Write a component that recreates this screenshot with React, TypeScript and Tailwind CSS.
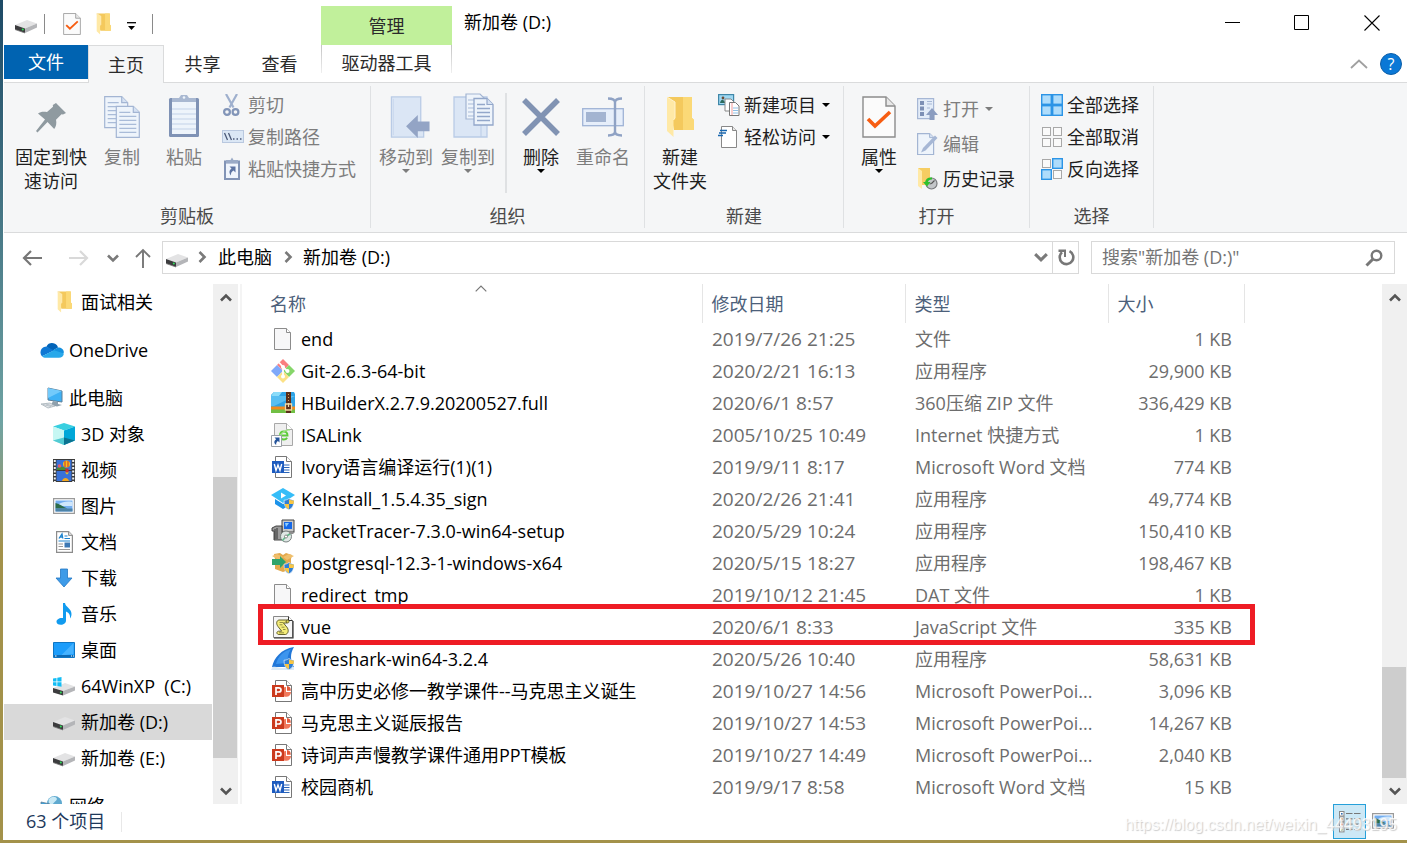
import React from 'react';

type IconProps = { className?: string };

/* ---------- Shared icons ---------- */

const Drive = ({ className = 'w-6 h-[22px]' }: IconProps) => (
  <svg viewBox="0 0 24 22" className={className}>
    <path d="M1 11 13 6l10 3.500-12 5z" fill="#e3e3e4" />
    <path d="M1 11l10 3.500V19L1 15.500z" fill="#3c3c3e" />
    <path d="M11 14.500l12-5v4L11 19z" fill="#b4b5b8" />
    <path d="M1 15.500 11 19" stroke="#777" strokeWidth=".8" />
    <circle cx="8.800" cy="15.600" r="1" fill="#2fe05a" />
  </svg>
);

const WinDrive = () => (
  <svg viewBox="0 0 24 22" className="w-6 h-[22px]">
    <path d="M1 13 13 8l10 3.500-12 4.500z" fill="#e3e3e4" />
    <path d="M1 13l10 3v4.500L1 17.500z" fill="#3c3c3e" />
    <path d="M11 16l12-4.500v4L11 20.500z" fill="#b4b5b8" />
    <circle cx="8.800" cy="17.500" r="1" fill="#2fe05a" />
    <path d="M1 3.500l3.500-.6v3.600H1zM5.300 2.800 9.500 2v4.500H5.300zM1 7.300h3.500v3.600L1 10.400zM5.300 7.300h4.200v4.500l-4.200-.8z" fill="#12bdf5" />
  </svg>
);

const Folder = ({ className = 'w-[15px] h-[22px]' }: IconProps) => (
  <svg viewBox="0 0 28 42" className={className}>
    <path d="M1 1h25v21l2 2v10H8z" fill="#f4c95d" />
    <path d="M17 1h9v21l2 2v10H17z" fill="#fbd977" />
    <path d="M1 1l8 5v16l-1.500 2V41L1 35z" fill="#ffe9a6" />
    <path d="M1 1l8 5v16l-1.500 2" fill="none" stroke="#fff3cf" strokeWidth="1" />
  </svg>
);

const CheckDoc = ({ className = '' }: IconProps) => (
  <svg viewBox="0 0 34 42" className={className}>
    <path d="M1 1h23l9 9v31H1z" fill="#fbfbfb" stroke="#8c8c8c" strokeWidth="1.400" />
    <path d="M24 1v9h9" fill="#e8e8e8" stroke="#8c8c8c" strokeWidth="1.400" />
    <path d="M6 23l7 7 15-14" fill="none" stroke="#f75d12" strokeWidth="3.600" />
  </svg>
);

const Caret = ({ className = '' }: IconProps) => (
  <svg viewBox="0 0 8 4" className={`w-2 h-1 shrink-0 ${className}`}>
    <path d="M0 0h8L4 4z" fill="currentColor" />
  </svg>
);

const Chevron = ({ className = '' }: IconProps) => (
  <svg viewBox="0 0 12 12" className={`w-3 h-3 shrink-0 ${className}`}>
    <path d="M1 3.500l5 5 5-5" fill="none" stroke="currentColor" strokeWidth="2.600" />
  </svg>
);

const Shield = () => (
  <g>
    <path d="M18 11.500c-2 1.400-3.500 1.700-5 1.700 0 5 1.500 8 5 9.600 3.500-1.600 5-4.600 5-9.600-1.500 0-3-.3-5-1.700z" fill="#2f7fd6" stroke="#fff" strokeWidth=".6" />
    <path d="M18 12.200V17h4.500c.3-1.200.4-2.300.4-3.400-1.800 0-3.200-.3-4.900-1.400zM18 17v5.200c-2.300-1-3.800-2.800-4.500-5.200z" fill="#f9c643" />
  </g>
);

/* ---------- Ribbon icons ---------- */

const Pin = () => (
  <svg viewBox="0 0 34 42" className="w-[34px] h-[42px]">
    <path d="M22 7l10 10-3 1.500-1.500-.3-5.500 5.600c.8 3.500.2 6.600-1.800 9.200L13.500 26 3.500 36.500 2 35l9-11.500L4 17.500c2.500-1.900 5.600-2.300 9-1.400l6-5.400-.2-1.800z" fill="#8f9aa0" />
  </svg>
);

const SheetLines = ({ x, y }: { x: number; y: number }) => (
  <g>
    <path d={`M${x} ${y}h17l6 6v25h-23z`} fill="#eef4fb" stroke="#a3b5d3" strokeWidth="1.200" />
    <path d={`M${x + 17} ${y}v6h6`} fill="#d6e2f3" stroke="#a3b5d3" strokeWidth="1.200" />
    <path
      d={`M${x + 3} ${y + 6}h11M${x + 3} ${y + 10}h17M${x + 3} ${y + 14}h17M${x + 3} ${y + 18}h17M${x + 3} ${y + 22}h17M${x + 3} ${y + 26}h17`}
      stroke="#a9bbd8"
      strokeWidth="1.300"
    />
  </g>
);

const CopyIcon = () => (
  <svg viewBox="0 0 36 42" className="w-9 h-[42px]">
    <SheetLines x={0.7} y={0.7} />
    <SheetLines x={12.3} y={10.3} />
  </svg>
);

const PasteIcon = () => (
  <svg viewBox="0 0 32 44" className="w-8 h-[44px] -mt-0.5">
    <rect x="1" y="4" width="30" height="39" rx="1.500" fill="#7f92b5" />
    <path d="M4 8h24v32H4z" fill="#eef4fb" />
    <path d="M4 15h24M4 20h24M4 25h24M4 30h24M4 35h24" stroke="#c3d2e8" strokeWidth="1" />
    <path d="M4 4h7l2-3h6l2 3h7v4H4z" fill="#a9b8d1" />
    <circle cx="16" cy="3.500" r="1.300" fill="#eef4fb" />
  </svg>
);

const CutIcon = () => (
  <svg viewBox="0 0 22 22" className="w-[22px] h-[22px]">
    <path d="M4 0l7.500 13.500M15 0 7.500 13.500" stroke="#9fb0ce" strokeWidth="2.200" />
    <circle cx="5" cy="18" r="2.900" fill="none" stroke="#8295b8" strokeWidth="2.200" />
    <circle cx="13.500" cy="18" r="2.900" fill="none" stroke="#8295b8" strokeWidth="2.200" />
  </svg>
);

const PathIcon = () => (
  <svg viewBox="0 0 22 22" className="w-[22px] h-[22px]">
    <rect x=".5" y="4.500" width="21" height="12" fill="#dbe7f5" stroke="#b9c8df" />
    <path d="M2.500 7l3 7M6.500 7l3 7" stroke="#4c5a78" strokeWidth="1.300" />
    <path d="M11 13h1.500M14.500 13H16M18 13h1.500" stroke="#4c5a78" strokeWidth="1.500" />
  </svg>
);

const PasteShortcut = () => (
  <svg viewBox="0 0 22 24" className="w-[22px] h-6">
    <rect x="2" y="3.500" width="16" height="19.500" fill="#8294b6" />
    <path d="M4 6.500h12v14.500H4z" fill="#f0f5fc" />
    <path d="M4 3h4.500L10 .5 11.500 3H16v3H4z" fill="#9aaac6" />
    <path d="M7.500 9.500h6v6l-2-2c-2 1.200-2.800 2.700-2.500 5-2.300-2.600-1.900-5.200.5-7z" fill="#5e75a3" />
  </svg>
);

const MoveTo = () => (
  <svg viewBox="0 0 40 43" className="w-10 h-[42px] ml-2">
    <path d="M1 1h30v28h3v13H1z" fill="#dbe6f5" stroke="#b9cbe6" strokeWidth="1.300" />
    <path d="M3 3v37" stroke="#c9d8ee" />
    <path d="M16 31l12-11.500V26h12v10H28v7z" fill="#93a4c5" />
  </svg>
);

const CopyTo = () => (
  <svg viewBox="0 0 41 45" className="w-[41px] h-[45px] -mt-[3px] ml-2.5">
    <path d="M1 4h33v40H1z" fill="#dbe6f5" stroke="#b9cbe6" strokeWidth="1.300" />
    <path d="M28 30v14" stroke="#b9cbe6" />
    <path d="M13 1h14l5 5v20H13z" fill="#eef4fb" stroke="#a3b5d3" strokeWidth="1.200" />
    <path d="M15 7h6M15 11h6M15 15h6M15 19h6M15 23h6" stroke="#a9bbd8" />
    <path d="M21 5.500h13l6 6V32H21z" fill="#eef4fb" stroke="#93a7ca" strokeWidth="1.300" />
    <path d="M34 5.500v6h6" fill="#d6e2f3" stroke="#93a7ca" strokeWidth="1.200" />
    <path d="M24 11.500h8M24 15.500h13M24 19.500h13M24 23.500h13M24 27.500h13" stroke="#93a7ca" strokeWidth="1.300" />
  </svg>
);

const DeleteIcon = () => (
  <svg viewBox="0 0 38 42" className="w-[38px] h-[42px]">
    <path d="M2 4l34 34M36 4 2 38" stroke="#8193b3" strokeWidth="5.500" />
  </svg>
);

const RenameIcon = () => (
  <svg viewBox="0 0 42 42" className="w-[42px] h-[42px]">
    <rect x=".7" y="12.700" width="40.600" height="17" fill="#e6eefa" stroke="#9fb3d6" strokeWidth="1.300" />
    <rect x="4" y="16" width="20" height="10" fill="#a3b4d1" />
    <path d="M26 2.500c4 0 7 1.200 7 4v29c0 2.800-3 4-7 4M40 2.500c-4 0-7 1.200-7 4M40 39.500c-4 0-7-1.200-7-4" fill="none" stroke="#8fa2c4" strokeWidth="2.400" />
  </svg>
);

const NewItem = () => (
  <svg viewBox="0 0 22 22" className="w-[22px] h-[22px]">
    <rect x=".6" y=".6" width="15" height="10" fill="#9fd8f2" stroke="#3f87a8" strokeWidth="1.200" />
    <path d="M2 9c1-4 3-4 4-2l2 2z" fill="#2e6b5d" />
    <circle cx="5" cy="4" r="1.400" fill="#6d4b35" />
    <path d="M7 5h6l3 3v9H7z" fill="#fff" stroke="#888" />
    <path d="M11.500 8.500h6l3.500 3.500v9.500h-9.500z" fill="#fff" stroke="#777" />
    <path d="M14 9v12" stroke="#f19b9b" />
    <path d="M15 14h5M15 16.500h5M15 19h5" stroke="#8fc0e6" />
  </svg>
);

const EasyAccess = () => (
  <svg viewBox="0 0 22 22" className="w-[22px] h-[22px]">
    <path d="M3.500.5h11l4 4v17h-15z" fill="#fff" stroke="#888" />
    <path d="M14.500.5v4h4" fill="#e8e8e8" stroke="#888" />
    <path d="M2 4.500h7M1 7h7M0 9.500h5" stroke="#1867b0" strokeWidth="1.300" />
  </svg>
);

const OpenIcon = () => (
  <svg viewBox="0 0 22 24" className="w-[22px] h-6">
    <path d="M.6 1.600h16v20H.6z" fill="#e3ecf8" stroke="#a6b7d5" strokeWidth="1.200" />
    <path d="M3 4h4v4H3zM3 9.500h4v4H3zM3 15h4v4H3z" fill="#7d90b5" />
    <path d="M10 4.500h5M10 7h5M10 11h3" stroke="#a6b7d5" />
    <path d="M15 11l6 7h-3.500v5h-5v-5H9z" fill="#8b9dc0" />
  </svg>
);

const EditIcon = () => (
  <svg viewBox="0 0 22 22" className="w-[22px] h-[22px]">
    <path d="M.6.600h12l4 4v17H.6z" fill="#eef4fb" stroke="#a3b5d3" strokeWidth="1.200" />
    <path d="M12.600.600v4h4" fill="#d6e2f3" stroke="#a3b5d3" />
    <path d="M4 19.500l2-4.500L18 2.500l2.500 2.500L8.500 17.500z" fill="#a6b7d5" />
  </svg>
);

const HistoryIcon = () => (
  <svg viewBox="0 0 22 22" className="w-[22px] h-[22px]">
    <path d="M1 0h12v17H5z" fill="#f6cd62" />
    <path d="M1 0l4 3v18l-4-3z" fill="#ffe9a6" />
    <circle cx="14.500" cy="15.500" r="5.500" fill="#c3c6c9" stroke="#77797c" strokeWidth="1.200" />
    <path d="M14.500 15.500l3-3M14.500 15.500l-2 .5" stroke="#555" strokeWidth="1.100" />
    <path d="M15 9.500c-4-.5-6.500 1.500-6.800 4.500H6l4 4.500 3.500-4.500H11c.3-1.700 1.600-2.600 4-2.500z" fill="#2dc02c" />
  </svg>
);

const tiles = [
  [0, 0],
  [1, 0],
  [0, 1],
  [1, 1],
];

const SelectIcon = ({ on }: { on: boolean[] }) => (
  <svg viewBox="0 0 22 22" className="w-[22px] h-[22px]">
    {tiles.map(([x, y], i) =>
      on[i] ? (
        <rect key={i} x={x * 11 + 0.7} y={y * 11 + 0.7} width="9.600" height="9.600" fill="#aedcfb" stroke="#2b94e6" strokeWidth="1.400" />
      ) : (
        <rect key={i} x={x * 11 + 1.5} y={y * 11 + 1.5} width="8" height="8" fill="#fafafa" stroke="#a8a8a8" />
      ),
    )}
  </svg>
);

/* ---------- Navigation icons ---------- */

const Cloud = () => (
  <svg viewBox="0 0 24 16" className="w-6 h-4">
    <path d="M6.500 4.500C8 1 12 .2 15 1.800c1.700.9 2.500 2.200 3 3.600L12 9z" fill="#0364b8" />
    <path d="M6.500 4.500C3 4.600.5 7 .5 10.500c0 1.500.6 2.900 1.500 3.800l12-5.800z" fill="#0f78d4" />
    <path d="M18 5.400c3.500 0 5.800 2 5.900 5l-2.900 3-8.500-5z" fill="#1490df" />
    <path d="M2 14.300 14 8.200l9.900 3.300c-.3 2.700-2.400 4.300-5 4.300H6c-1.600 0-3-.5-4-1.500z" fill="#28a8ea" />
  </svg>
);

const ThisPc = () => (
  <svg viewBox="0 0 24 22" className="w-6 h-[22px]">
    <path d="M8 1l14 3v11L8 13z" fill="#3fb1f5" stroke="#5d7f98" />
    <path d="M8 1l14 3L8 11z" fill="#73cafb" />
    <path d="M13 14l5 1v2l4 1-5 1.500-6-1.500z" fill="#8fa0ac" />
    <path d="M1 17l9-1 5 3-7 2z" fill="#e8ebee" stroke="#9aa6ae" strokeWidth=".7" />
    <path d="M3 17.500l8 2M6 17l7 2" stroke="#9aa6ae" strokeWidth=".6" />
  </svg>
);

const Cube = () => (
  <svg viewBox="0 0 22 22" className="w-[22px] h-[22px]">
    <path d="M11 0l11 3.500-11 4L0 3.500z" fill="#39cfe0" />
    <path d="M0 3.500l11 4V22L0 17.500z" fill="#aef0ee" />
    <path d="M22 3.500l-11 4V22l11-4.500z" fill="#00a7d8" />
    <path d="M0 3.500l11 4v7L0 17.500z" fill="#c6f7f3" />
    <path d="M0 17.500l11-3V22z" fill="#52cbd3" />
    <path d="M22 17.500l-11-3V22z" fill="#0b7390" />
  </svg>
);

const Video = () => (
  <svg viewBox="0 0 22 23" className="w-[22px] h-[23px]">
    <path d="M0 0h22v23H0z" fill="#3b3b3b" />
    <path d="M3.500 1h15v10h-15zM3.500 12h15v10h-15z" fill="#3a72d8" />
    <path d="M1.800 1v22M20.200 1v22" stroke="#f2f2f2" strokeWidth="2" strokeDasharray="2 1.500" />
    <path d="M4 9c3-2 8-2 10 2H4z" fill="#4c8d35" />
    <circle cx="13.500" cy="5" r="3.500" fill="#f6c21c" />
    <path d="M12 2v6M15 2v6" stroke="#d12c2c" strokeWidth="1" />
    <circle cx="6.500" cy="7" r="1.800" fill="#e55b6c" />
    <path d="M9 22c1-4 6-4 7 0z" fill="#f6a81c" />
    <path d="M12.500 9.500h3v4h-3z" fill="#d12c2c" />
    <path d="M12 13.500h4l-2 2z" fill="#f6c21c" />
  </svg>
);

const Picture = ({ className = 'w-[22px] h-4' }: IconProps) => (
  <svg viewBox="0 0 22 16" className={className}>
    <path d="M.6.600h20.800v14.800H.6z" fill="#fff" stroke="#9a9a9a" strokeWidth="1.200" />
    <path d="M2.500 2.500h17v11h-17z" fill="#74aef0" />
    <path d="M6 6c3-2 8-3 13.500-2v4H6z" fill="#cfe6fb" />
    <path d="M2.500 5c4 1 8 4 12 5.500H2.500z" fill="#2c6b48" />
    <path d="M2.500 10.500h17v3h-17z" fill="#4d83a8" />
  </svg>
);

const Documents = () => (
  <svg viewBox="0 0 17 22" className="w-[17px] h-[22px]">
    <path d="M.6.600h12l3.800 3.800v17H.6z" fill="#fff" stroke="#8c8c8c" strokeWidth="1.200" />
    <path d="M12.600.600v3.800h3.800" fill="#e3e3e3" stroke="#8c8c8c" />
    <path d="M3 7.500 6 3l.8 4.500M4 6h3" fill="none" stroke="#1c83cf" strokeWidth="1.300" />
    <path d="M8.500 5h3M8.500 7.500h5.500M2.500 10H14" stroke="#1c83cf" strokeWidth="1.200" />
    <path d="M2.500 13H7M2.500 15.500H7M2.500 18.500H14" stroke="#999" />
    <path d="M8.500 11.500H14v5H8.500z" fill="#3c78b4" />
  </svg>
);

const Download = () => (
  <svg viewBox="0 0 18 20" className="w-[18px] h-5">
    <path d="M5.500 1h7v9H17l-8 9-8-9h4.500z" fill="#3e9be8" stroke="#2277c4" strokeWidth=".8" />
  </svg>
);

const Music = () => (
  <svg viewBox="0 0 16 22" className="w-4 h-[22px]">
    <path d="M7 0h2c.5 4 6.500 5.500 6.500 11 0 2-.8 3.500-1.500 4.500.5-4-1.500-6-4-7v9c0 2.500-2.300 4.300-5.200 4.300C2.200 21.800.5 20.500.5 18.700c0-2.300 2.800-4.300 6.500-3.700z" fill="#119bef" />
  </svg>
);

const Desktop = () => (
  <svg viewBox="0 0 22 16" className="w-[22px] h-4">
    <path d="M.5.500h21v15H.5z" fill="#1c9dfb" stroke="#0f76c4" />
    <path d="M20.500 1v11L8 13.500z" fill="#45b2ff" />
    <path d="M1 14h20" stroke="#0c6ab5" strokeWidth="2" />
    <path d="M2 14h1.500M18 14h1M20 14h1" stroke="#fff" />
  </svg>
);

const Network = () => (
  <svg viewBox="0 0 24 22" className="w-6 h-[22px]">
    <circle cx="14.500" cy="8.500" r="7.500" fill="#5fa9cf" />
    <path d="M9 4c3-3 7-3 8 0-1 3-4 3-5 7-3-1-4-4-3-7z" fill="#c9e9f5" />
    <path d="M1 7l9 2v8l-9-2z" fill="#3fa1d8" stroke="#5d7f98" strokeWidth=".8" />
  </svg>
);

/* ---------- File type icons ---------- */

const BlankFile = () => (
  <svg viewBox="0 0 24 24" className="w-6 h-6">
    <path d="M3.500 1.500h12l4 4v17h-16z" fill="#f7f7f8" stroke="#8c8c8c" />
    <path d="M15.500 1.500v4h4" fill="#fff" stroke="#8c8c8c" />
  </svg>
);

const GitFile = () => (
  <svg viewBox="0 0 24 24" className="w-6 h-6">
    <path d="M12 0l6 6-6 6-6-6z" fill="#fa7f7f" />
    <path d="M6 6l6 6-6 6-6-6z" fill="#7fa9fa" />
    <path d="M18 6l6 6-6 6-6-6z" fill="#86d66a" />
    <path d="M12 12l6 6-6 6-6-6z" fill="#fce186" />
    <path d="M8 3.500l4 4.500v10M12 8l4 4" stroke="#fff" strokeWidth="1.800" fill="none" />
    <circle cx="12" cy="8" r="2" fill="#fff" />
    <circle cx="16.500" cy="12" r="2" fill="#fff" />
    <circle cx="12" cy="17.500" r="2" fill="#fff" />
  </svg>
);

const ZipFile = () => (
  <svg viewBox="0 0 24 24" className="w-6 h-6">
    <path d="M0 4l3-3h20l1 2v14H0z" fill="#2ea3e6" />
    <path d="M0 5l3-4h8L8 5z" fill="#8bdcf9" />
    <path d="M0 5h24L3 15H0z" fill="#58bff2" />
    <path d="M0 15.500h24v4H0z" fill="#f28a1c" />
    <path d="M0 18.500h24V22H0z" fill="#71bf44" />
    <path d="M15 1h5v21h-5z" fill="#5a2d18" />
    <path d="M14.500 13h6v6h-6z" fill="none" stroke="#f3d9a4" strokeWidth="1.300" />
    <path d="M17.500 12v4" stroke="#f3d9a4" strokeWidth="1.200" />
    <path d="M17.500 3v1M17.500 6v1M17.500 9v1" stroke="#d9a25e" />
  </svg>
);

const LinkFile = () => (
  <svg viewBox="0 0 24 24" className="w-6 h-6">
    <path d="M3.500.500h12l6 6v16h-18z" fill="#efefef" stroke="#a8a8a8" />
    <path d="M15.500.500v6h6" fill="#fff" stroke="#a8a8a8" />
    <path d="M9 12.500h7.500c0-2.800-1.600-4-3.700-4S9 10 9 12.500s1.700 4 3.800 4c1.600 0 2.700-.7 3.300-1.800" fill="none" stroke="#5ecb3a" strokeWidth="1.900" />
    <path d="M7 15c3-5 8-9 12-8" fill="none" stroke="#9be27f" strokeWidth="1.200" />
    <path d="M.5 12.500h10v11H.5z" fill="#fff" stroke="#9aa0a6" />
    <path d="M3.500 14.500h5v5l-1.600-1.600C5.500 19 5 20.200 5.200 22 2.500 20 3 17.500 5.200 16.200z" fill="#24549b" />
  </svg>
);

const WordFile = () => (
  <svg viewBox="0 0 24 24" className="w-6 h-6">
    <path d="M4.500 1.500h11l5 5v16h-16z" fill="#fff" stroke="#777" />
    <path d="M15.500 1.500v5h5" fill="#fff" stroke="#777" />
    <path d="M13 10h5.500M13 12.500h5.500M13 15h5.500M13 17.500h5.500" stroke="#2b65b8" />
    <path d="M1 6h12v12H1z" fill="#1d5bbf" />
    <path d="M3.300 9l1.700 6.500L7 10l2 5.500L10.700 9" fill="none" stroke="#fff" strokeWidth="1.400" />
  </svg>
);

const PptFile = () => (
  <svg viewBox="0 0 24 24" className="w-6 h-6">
    <path d="M4.500 1.500h11l5 5v16h-16z" fill="#fff" stroke="#777" />
    <path d="M15.500 1.500v5h5" fill="#fff" stroke="#777" />
    <path d="M13 8.500c.8-.5 1.300-.6 2-.6v5h5c0 3-2.300 4.900-5 4.900-.7 0-1.400-.1-2-.4z" fill="#f0795c" />
    <path d="M16 7v4.800h3.800C19.800 8.800 18.400 7.200 16 7z" fill="#e45a3a" />
    <path d="M1 6h12v12H1z" fill="#cb3a1d" />
    <path d="M5 16V8.800h2.600c1.600 0 2.400.8 2.400 2.200S9.100 13 7.600 13H5" fill="none" stroke="#fff" strokeWidth="1.700" />
  </svg>
);

const KeFile = () => (
  <svg viewBox="0 0 24 24" className="w-6 h-6">
    <path d="M12 1l12 7-12 8L0 8z" fill="#35bdf8" />
    <path d="M4 12l8 5 7-4v5l-7 4-8-5z" fill="#1c93ea" />
    <path d="M10 5.500l5 3-5 3z" fill="#fff" />
    <Shield />
  </svg>
);

const SetupFile = () => (
  <svg viewBox="0 0 24 24" className="w-6 h-6">
    <path d="M11 1h12v12H11z" fill="#c9c9c9" stroke="#444" />
    <path d="M13 3h8v7h-8z" fill="#1568e8" />
    <path d="M14 4h4l-3 4z" fill="#8fd0ff" />
    <path d="M1 9l4-2h6v14H3V12H1z" fill="#9b9b9b" stroke="#333" strokeWidth=".9" />
    <path d="M4 10v10M6 9v11" stroke="#333" />
    <circle cx="15" cy="17.500" r="5.500" fill="#dfe7e5" stroke="#6d7775" strokeWidth=".9" />
    <path d="M15 17.500l4.500-3M15 17.500l-3.500 4" stroke="#63b98b" strokeWidth="1.600" />
    <circle cx="15" cy="17.500" r="1.500" fill="#fff" stroke="#666" strokeWidth=".7" />
    <path d="M18 13h6l-2 2h-4z" fill="#8e8e8e" />
  </svg>
);

const PostgresFile = () => (
  <svg viewBox="0 0 24 24" className="w-6 h-6">
    <path d="M3 3l6-1 3 2 3-2 6 2-1 4v10l-8 3-8-3V8z" fill="#e3a94d" />
    <path d="M1 5l5-2 6 3-4 3zM23 5l-5-2-6 3 4 3z" fill="#efbf6c" />
    <path d="M1 8h8V5l6 6-6 6v-3H1z" fill="#2fa36b" />
    <Shield />
  </svg>
);

const ScriptFile = () => (
  <svg viewBox="0 0 24 24" className="w-6 h-6">
    <path d="M2.500 1.500h15l4 4v17h-19z" fill="#f6f6f6" stroke="#888" />
    <path d="M3 23h19V6" fill="none" stroke="#333" strokeWidth="1.200" />
    <path d="M17.500 1.500v4h4" fill="#fff" stroke="#333" />
    <path d="M8 5h8.500c-1.500.6-1.700 2-.5 3h-3.500l4 5c1.500 3 .5 5.800-2 6.500H8c-2.500 0-3-2.800-.5-3.300h3.200L7 11.500C4.800 8.500 5.500 5.500 8 5z" fill="#f4ec78" stroke="#55531f" strokeWidth=".9" />
    <path d="M16.500 5c2.200.3 2 3.300-.5 3-1.200-1-1-2.400.5-3z" fill="#d8ce52" stroke="#55531f" strokeWidth=".8" />
    <path d="M8.500 7.500h4M8.500 9.800h3M10.500 12.200h3M12 14.500h2.500M8 17.800h5" stroke="#7a7733" strokeWidth=".8" />
  </svg>
);

const SharkFile = () => (
  <svg viewBox="0 0 24 24" className="w-6 h-6">
    <path d="M1 20C3 11 10 2 23 0c-4 7-4 13 0 20z" fill="#2177d8" />
    <path d="M5 17C7 9 13 4 20 2c-3 5-4 9-3 14z" fill="#3c95ee" />
    <path d="M0 23l1.500-3c4-1 6 1 9 1s6-1 12.500-1v3z" fill="#dcebf7" />
    <Shield />
  </svg>
);

/* ---------- Data ---------- */

const files = [
  { icon: BlankFile, name: 'end', date: '2019/7/26 21:25', type: '文件', size: '1 KB' },
  { icon: GitFile, name: 'Git-2.6.3-64-bit', date: '2020/2/21 16:13', type: '应用程序', size: '29,900 KB' },
  { icon: ZipFile, name: 'HBuilderX.2.7.9.20200527.full', date: '2020/6/1 8:57', type: '360压缩 ZIP 文件', size: '336,429 KB' },
  { icon: LinkFile, name: 'ISALink', date: '2005/10/25 10:49', type: 'Internet 快捷方式', size: '1 KB' },
  { icon: WordFile, name: 'Ivory语言编译运行(1)(1)', date: '2019/9/11 8:17', type: 'Microsoft Word 文档', size: '774 KB' },
  { icon: KeFile, name: 'KeInstall_1.5.4.35_sign', date: '2020/2/26 21:41', type: '应用程序', size: '49,774 KB' },
  { icon: SetupFile, name: 'PacketTracer-7.3.0-win64-setup', date: '2020/5/29 10:24', type: '应用程序', size: '150,410 KB' },
  { icon: PostgresFile, name: 'postgresql-12.3-1-windows-x64', date: '2020/5/15 18:27', type: '应用程序', size: '198,467 KB' },
  { icon: BlankFile, name: 'redirect_tmp', date: '2019/10/12 21:45', type: 'DAT 文件', size: '1 KB' },
  { icon: ScriptFile, name: 'vue', date: '2020/6/1 8:33', type: 'JavaScript 文件', size: '335 KB', marked: true },
  { icon: SharkFile, name: 'Wireshark-win64-3.2.4', date: '2020/5/26 10:40', type: '应用程序', size: '58,631 KB' },
  { icon: PptFile, name: '高中历史必修一教学课件--马克思主义诞生', date: '2019/10/27 14:56', type: 'Microsoft PowerPoi...', size: '3,096 KB' },
  { icon: PptFile, name: '马克思主义诞辰报告', date: '2019/10/27 14:53', type: 'Microsoft PowerPoi...', size: '14,267 KB' },
  { icon: PptFile, name: '诗词声声慢教学课件通用PPT模板', date: '2019/10/27 14:49', type: 'Microsoft PowerPoi...', size: '2,040 KB' },
  { icon: WordFile, name: '校园商机', date: '2019/9/17 8:58', type: 'Microsoft Word 文档', size: '15 KB' },
];

const pcItems = [
  { icon: Cube, name: '3D 对象' },
  { icon: Video, name: '视频' },
  { icon: Picture, name: '图片' },
  { icon: Documents, name: '文档' },
  { icon: Download, name: '下载' },
  { icon: Music, name: '音乐' },
  { icon: Desktop, name: '桌面' },
  { icon: WinDrive, name: '64WinXP  (C:)' },
  { icon: Drive, name: '新加卷 (D:)', active: true },
  { icon: Drive, name: '新加卷 (E:)' },
];

/* ---------- Building blocks ---------- */

function BigButton({ icon, label, disabled, caret, wide }: { icon: React.ReactNode; label: string; disabled?: boolean; caret?: boolean; wide?: boolean }) {
  return (
    <button
      className={`flex flex-col items-center pt-2.5 shrink-0 ${wide ? 'w-20' : 'w-[62px]'} ${disabled ? 'text-[#7d7d7d]' : 'text-[#1e1e1e]'}`}
      disabled={disabled}
    >
      <span className="h-[42px] flex justify-center">{icon}</span>
      <span className="mt-[7px] leading-6 whitespace-pre">{label}</span>
      {caret && <Caret className={disabled ? '' : 'text-black'} />}
    </button>
  );
}

function SmallButton({ icon, label, disabled, caret, tall }: { icon: React.ReactNode; label: string; disabled?: boolean; caret?: boolean; tall?: boolean }) {
  return (
    <button
      className={`flex items-center gap-1 whitespace-nowrap ${tall ? 'h-[35px]' : 'h-8'} ${disabled ? 'text-[#7d7d7d]' : 'text-[#1e1e1e]'}`}
      disabled={disabled}
    >
      <span className="w-[22px] shrink-0">{icon}</span>
      <span>{label}</span>
      {caret && <Caret className={disabled ? 'ml-0.5' : 'ml-0.5 text-black'} />}
    </button>
  );
}

function Group({ label, className, children }: { label: string; className: string; children: React.ReactNode }) {
  return (
    <section className={`flex flex-col shrink-0 border-r border-[#dfe1e3] ${className}`}>
      <div className="flex flex-1 pl-1">{children}</div>
      <div className="h-6 leading-6 text-center text-[#4a4a4a]">{label}</div>
    </section>
  );
}

function NavItem({ icon, name, root, active }: { icon: React.ReactNode; name: string; root?: boolean; active?: boolean }) {
  return (
    <a href="#" className={`flex items-center h-9 gap-[5px] whitespace-pre ${root ? 'pl-9' : 'pl-12'} ${active ? 'bg-[#d9d9d9]' : ''}`}>
      <span className="w-6 flex justify-center shrink-0">{icon}</span>
      <span>{name}</span>
    </a>
  );
}

function ScrollBar({ before, thumb }: { before: string; thumb: string }) {
  return (
    <div className="w-[25px] shrink-0 bg-[#f0f0f0] flex flex-col items-center text-[#555]">
      <button aria-label="向上滚动" className="h-7 flex items-center">
        <Chevron className="rotate-180" />
      </button>
      <div className={before} />
      <div className={`w-6 self-start bg-[#cdcdcd] ${thumb}`} />
      <button aria-label="向下滚动" className="h-[26px] mt-auto flex items-center">
        <Chevron />
      </button>
    </div>
  );
}

function TitleBar() {
  return (
    <header className="flex h-[45px] shrink-0">
      <div className="w-[317px] shrink-0 flex items-start pt-3 pl-2.5">
        <Drive className="w-6 h-[22px] mt-0.5" />
        <span className="w-px h-5 mt-0.5 ml-1.5 bg-[#8a8a8a]" />
        <button aria-label="属性" className="ml-[18px]">
          <CheckDoc className="w-[18px] h-[22px] mt-px" />
        </button>
        <button aria-label="新建文件夹" className="ml-[15px] mt-px">
          <Folder />
        </button>
        <button aria-label="自定义快速访问工具栏" className="ml-4 mt-2.5">
          <svg viewBox="0 0 9 9" className="w-[9px] h-[9px]">
            <path d="M0 .7h9" stroke="#000" strokeWidth="1.300" />
            <path d="M1 4h7L4.500 8z" />
          </svg>
        </button>
        <span className="w-px h-5 mt-0.5 ml-4 bg-[#8a8a8a]" />
      </div>
      <div className="w-[131px] shrink-0 h-[39px] mt-1.5 bg-[#c1f09b] text-[#2b2b2b] leading-10 text-center">管理</div>
      <h1 className="flex-1 pl-3 leading-[44px] text-black">新加卷 (D:)</h1>
      <button aria-label="最小化" className="w-[70px] flex justify-center items-center">
        <svg viewBox="0 0 16 16" className="w-4 h-4">
          <path d="M1 7.500h15" stroke="#000" />
        </svg>
      </button>
      <button aria-label="最大化" className="w-[70px] flex justify-center items-center">
        <svg viewBox="0 0 16 16" className="w-4 h-4">
          <path d="M.5.500h14v14H.5z" fill="none" stroke="#000" />
        </svg>
      </button>
      <button aria-label="关闭" className="w-[70px] flex justify-center items-center">
        <svg viewBox="0 0 16 16" className="w-4 h-4">
          <path d="M.500.500l15 15M15.500.500l-15 15" stroke="#000" strokeWidth="1.100" />
        </svg>
      </button>
    </header>
  );
}

function Tabs() {
  return (
    <nav className="flex h-[38px] shrink-0 text-[#2b2b2b] border-b border-[#dadbdc]">
      <button className="w-[84px] h-[34px] bg-[#0063b1] text-white">文件</button>
      <button className="w-[76px] h-[38px] bg-[#f5f6f7] border border-b-0 border-[#dadbdc]">主页</button>
      <button className="w-[77px]">共享</button>
      <button className="w-[77px]">查看</button>
      <div className="w-[3px]" />
      <button className="w-[131px] h-[37px] flex">
        <span className="w-px h-7 bg-linear-to-b from-[#c4c4c4] to-[#eeeeee]" />
        <span className="flex-1 leading-[37px]">驱动器工具</span>
        <span className="w-px h-7 bg-linear-to-b from-[#c4c4c4] to-[#eeeeee]" />
      </button>
      <div className="flex-1" />
      <button aria-label="折叠功能区" className="mr-3 text-[#a0a0a0]">
        <svg viewBox="0 0 18 10" className="w-[18px] h-2.5">
          <path d="M1 9l8-7.500L17 9" fill="none" stroke="currentColor" strokeWidth="1.800" />
        </svg>
      </button>
      <button aria-label="帮助" className="mr-[5px]">
        <span className="flex w-[22px] h-[22px] rounded-full bg-[#0a78d6] border border-[#0b5ea8] text-white text-base items-center justify-center">?</span>
      </button>
    </nav>
  );
}

function Ribbon() {
  return (
    <div className="flex shrink-0 h-[150px] pt-[3px] pb-1 bg-[#f5f6f7] border-b border-[#dadbdc] overflow-hidden">
      <Group label="剪贴板" className="w-[367px]">
        <div className="w-[3px]" />
        <BigButton icon={<Pin />} label={'固定到快\n速访问'} wide />
        <BigButton icon={<CopyIcon />} label="复制" disabled />
        <BigButton icon={<PasteIcon />} label="粘贴" disabled />
        <div className="pt-[3px] pl-[7px]">
          <SmallButton icon={<CutIcon />} label="剪切" disabled />
          <SmallButton icon={<PathIcon />} label="复制路径" disabled />
          <SmallButton icon={<PasteShortcut />} label="粘贴快捷方式" disabled />
        </div>
      </Group>
      <Group label="组织" className="w-[274px]">
        <BigButton icon={<MoveTo />} label="移动到" disabled caret />
        <BigButton icon={<CopyTo />} label="复制到" disabled caret />
        <div className="w-0.5 h-[100px] mt-[7px] ml-1.5 mr-[3px] bg-[#dfe1e3]" />
        <BigButton icon={<DeleteIcon />} label="删除" caret />
        <BigButton icon={<RenameIcon />} label="重命名" disabled />
      </Group>
      <Group label="新建" className="w-[199px]">
        <BigButton icon={<Folder className="w-7 h-[42px]" />} label={'新建\n文件夹'} />
        <div className="pt-[3px] pl-[7px]">
          <SmallButton icon={<NewItem />} label="新建项目" caret />
          <SmallButton icon={<EasyAccess />} label="轻松访问" caret />
        </div>
      </Group>
      <Group label="打开" className="w-[186px]">
        <BigButton icon={<CheckDoc className="w-[34px] h-[42px]" />} label="属性" caret />
        <div className="pt-[5px] pl-[7px]">
          <SmallButton icon={<OpenIcon />} label="打开" disabled caret tall />
          <SmallButton icon={<EditIcon />} label="编辑" disabled tall />
          <SmallButton icon={<HistoryIcon />} label="历史记录" tall />
        </div>
      </Group>
      <Group label="选择" className="w-[124px]">
        <div className="pt-[3px] pl-[7px]">
          <SmallButton icon={<SelectIcon on={[true, true, true, true]} />} label="全部选择" />
          <SmallButton icon={<SelectIcon on={[false, false, false, false]} />} label="全部取消" />
          <SmallButton icon={<SelectIcon on={[false, true, true, false]} />} label="反向选择" />
        </div>
      </Group>
    </div>
  );
}

function AddressBar() {
  return (
    <div className="flex shrink-0 h-[51px] pt-2 pr-3 items-start">
      <div className="flex items-center h-[33px] w-[158px] shrink-0 pl-[18px] pt-px text-[#7a7a7a]">
        <button aria-label="后退">
          <svg viewBox="0 0 21 16" className="w-[21px] h-4">
            <path d="M9 1 2 8l7 7M2 8h18" fill="none" stroke="#777" strokeWidth="2.200" />
          </svg>
        </button>
        <button aria-label="前进" className="ml-[25px]">
          <svg viewBox="0 0 21 16" className="w-[21px] h-4">
            <path d="M12 1l7 7-7 7M19 8H1" fill="none" stroke="#d9d9d9" strokeWidth="2.200" />
          </svg>
        </button>
        <button aria-label="最近浏览的位置" className="ml-[18px]">
          <Chevron className="w-2.5 h-2.5" />
        </button>
        <button aria-label="上移" className="ml-[15px]">
          <svg viewBox="0 0 18 20" className="w-[18px] h-5">
            <path d="M2 9l7-7 7 7M9 2v18" fill="none" stroke="#777" strokeWidth="1.900" />
          </svg>
        </button>
      </div>
      <div className="flex flex-1 h-[33px] pb-px border border-[#d9d9d9] items-center text-black">
        <Drive className="w-6 h-[22px] ml-0.5 mt-1" />
        <Chevron className="-rotate-90 ml-[7px] text-[#7a7a7a]" />
        <a href="#" className="ml-2.5">此电脑</a>
        <Chevron className="-rotate-90 ml-2.5 text-[#7a7a7a]" />
        <a href="#" className="ml-[9px]">新加卷 (D:)</a>
        <button aria-label="展开" className="ml-auto mr-1 text-[#7a7a7a]">
          <Chevron className="w-3.5 h-3.5" />
        </button>
        <button aria-label="刷新" className="w-[26px] h-[31px] border-l border-[#d9d9d9] flex items-center justify-center">
          <svg viewBox="0 0 18 18" className="w-[18px] h-[18px]">
            <path d="M12.500 3.200A6.800 6.800 0 1 1 5 4.200" fill="none" stroke="#777" strokeWidth="2.600" />
            <path d="M1.500 1.500H9V9H7V4H1.500z" fill="#777" />
          </svg>
        </button>
      </div>
      <div className="flex w-[304px] ml-3 h-[33px] border border-[#d9d9d9] items-center pl-2.5 pr-[11px]">
        <input
          type="search"
          aria-label="搜索"
          placeholder={'搜索"新加卷 (D:)"'}
          className="flex-1 min-w-0 h-full pb-px outline-none placeholder:text-[#757575]"
        />
        <svg viewBox="0 0 18 18" className="w-[18px] h-[18px]">
          <circle cx="11.500" cy="6.500" r="4.800" fill="none" stroke="#777" strokeWidth="2.400" />
          <path d="M8 10 1.500 16.500" stroke="#777" strokeWidth="3" />
        </svg>
      </div>
    </div>
  );
}

function Sidebar() {
  return (
    <aside className="flex w-[238px] shrink-0 border-r-2 border-[#f4f4f4] text-black">
      <nav className="w-[209px] h-[520px] shrink-0 overflow-hidden pr-px">
        <NavItem icon={<Folder />} name="面试相关" />
        <div className="my-3">
          <NavItem icon={<Cloud />} name="OneDrive" root />
        </div>
        <NavItem icon={<ThisPc />} name="此电脑" root />
        {pcItems.map((item) => {
          const Icon = item.icon;
          return <NavItem key={item.name} icon={<Icon />} name={item.name} active={item.active} />;
        })}
        <div className="mt-3">
          <NavItem icon={<Network />} name="网络" root />
        </div>
      </nav>
      <ScrollBar before="h-[165px]" thumb="h-[281px]" />
    </aside>
  );
}

function FileList() {
  return (
    <section className="flex-1 min-w-0 pl-[18px]">
      <table className="w-[984px] table-fixed text-left text-[#6d6d6d]">
        <thead>
          <tr className="text-[#4c607a]">
            <th className="relative w-[442px] h-[39px] p-0 pl-2.5 font-normal">
              名称
              <svg viewBox="0 0 12 7" className="absolute top-px left-1/2 -ml-1.5 w-3 h-[7px]">
                <path d="M.7 6.300 6 1l5.300 5.300" fill="none" stroke="#777" strokeWidth="1.200" />
              </svg>
            </th>
            <th className="w-[203px] p-0 pl-[9px] font-normal border-l border-[#e5e5e5]">修改日期</th>
            <th className="w-[203px] p-0 pl-[9px] font-normal border-l border-[#e5e5e5]">类型</th>
            <th className="w-[136px] p-0 pl-[9px] font-normal border-x border-[#e5e5e5]">大小</th>
          </tr>
        </thead>
        <tbody>
          {files.map((file) => {
            const Icon = file.icon;
            return (
              <tr key={file.name} className="relative whitespace-nowrap">
                <td className="h-8 p-0 pl-[11px] text-black">
                  <span className="flex items-center gap-1.5">
                    <Icon />
                    {file.name}
                  </span>
                  {file.marked && <span className="absolute z-10 -top-[7px] -bottom-0.5 -left-0.5 -right-[11px] border-[5px] border-[#ee1c24]" />}
                </td>
                <td className="p-0 pl-2.5 text-[19px]">{file.date}</td>
                <td className="p-0 pl-2.5">{file.type}</td>
                <td className="p-0 pr-3 text-right">{file.size}</td>
              </tr>
            );
          })}
        </tbody>
      </table>
    </section>
  );
}

function StatusBar() {
  return (
    <footer className="relative flex h-9 shrink-0 items-start pl-[22px] pr-[13px] text-[#1e395b]">
      <span className="leading-[34px]">63 个项目</span>
      <span className="w-px h-5 mt-2 ml-4 bg-[#e8e8e8]" />
      <button aria-label="详细信息" className="ml-auto w-[33px] h-[35px] bg-[#cce8f6] border border-[#26a0da] flex items-center justify-center">
        <svg viewBox="0 0 22 22" className="w-[22px] h-[22px]">
          {[0, 1, 2, 3].map((i) => (
            <g key={i}>
              <rect x=".5" y={i * 5.3 + 0.5} width="4.500" height="4.500" fill="#fff" stroke="#888" />
              <rect x="2" y={i * 5.3 + 2} width="1.600" height="1.600" fill={['#2f6fb5', '#b5632f', '#d22', '#3a9a3a'][i]} />
              <path d={`M7 ${i * 5.3 + 2.5}h6.500M15 ${i * 5.3 + 2.5}h6.500`} stroke="#777" strokeWidth="1.200" />
            </g>
          ))}
        </svg>
      </button>
      <button aria-label="大图标" className="ml-1.5 h-[34px]">
        <Picture />
      </button>
      <span className="absolute right-2.5 top-[9px] leading-6 text-base text-white/80 [text-shadow:1px_1px_1px_#ccc] font-['Liberation_Sans',sans-serif] pointer-events-none">
        https://blog.csdn.net/weixin_44493195
      </span>
    </footer>
  );
}

export default function App() {
  return (
    <div className="min-h-screen flex pb-[3px] bg-linear-to-b from-[#1d4a66] from-0% via-[#6fa3a3] via-50% to-[#a3924a] to-65% text-lg leading-6 font-['Open_Sans','Noto_Sans_CJK_SC',sans-serif]">
      <div className="flex-1 min-w-0 flex flex-col ml-[3px] border-l border-white bg-white">
        <TitleBar />
        <Tabs />
        <Ribbon />
        <AddressBar />
        <main className="flex flex-1">
          <Sidebar />
          <FileList />
          <ScrollBar before="h-[355px]" thumb="h-[111px]" />
        </main>
        <StatusBar />
      </div>
    </div>
  );
}
